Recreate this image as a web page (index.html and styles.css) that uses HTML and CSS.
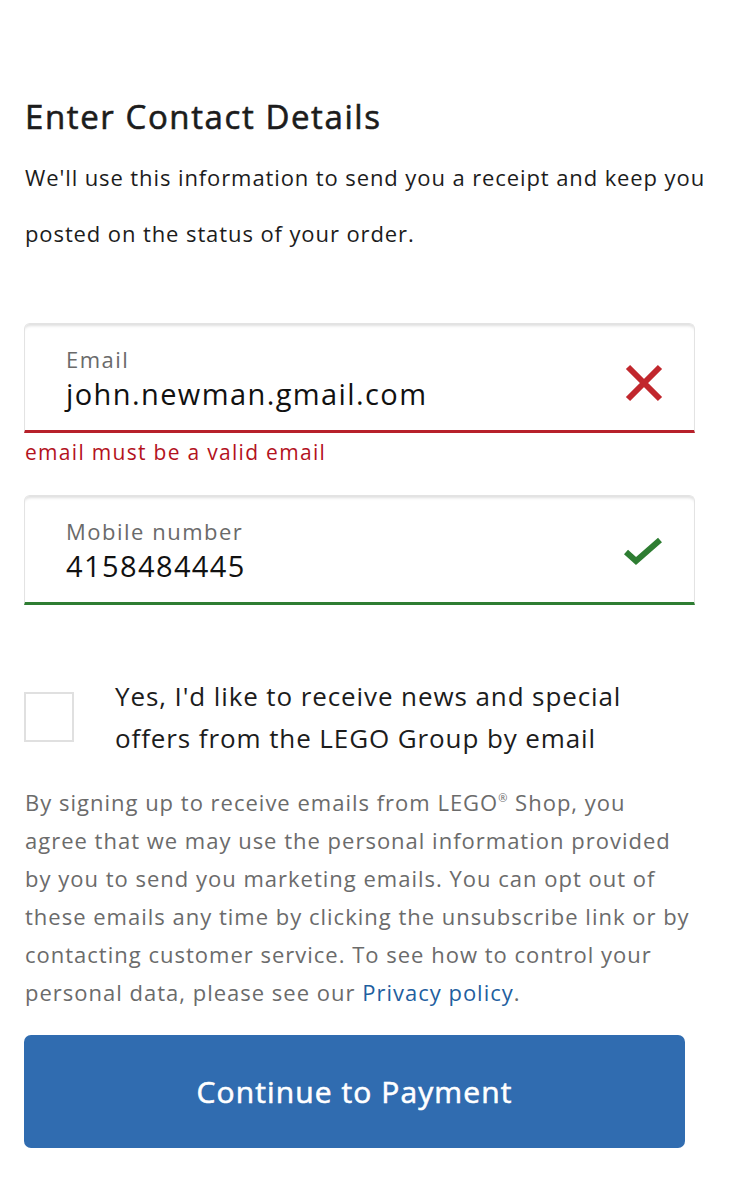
FILE: index.html
```html
<!DOCTYPE html>
<html lang="en">
<head>
<meta charset="utf-8">
<title>Enter Contact Details</title>
<link rel="stylesheet" href="styles.css">
</head>
<body>
<main class="page">
  <h1 class="title">Enter Contact Details</h1>
  <p class="intro">We'll use this information to send you a receipt and keep you posted on the status of your order.</p>

  <div class="field field--error">
    <div class="field__text">
      <span class="field__label">Email</span>
      <span class="field__value">john.newman.gmail.com</span>
    </div>
    <svg class="field__icon field__icon--x" width="40" height="38" viewBox="0 0 40 38" aria-hidden="true">
      <path d="M4 3 L36 35 M36 3 L4 35" stroke="#c1272d" stroke-width="6" fill="none"/>
    </svg>
  </div>
  <p class="field-error">email must be a valid email</p>

  <div class="field field--valid">
    <div class="field__text">
      <span class="field__label">Mobile number</span>
      <span class="field__value">4158484445</span>
    </div>
    <svg class="field__icon field__icon--check" width="40" height="30" viewBox="0 0 40 30" aria-hidden="true">
      <path d="M2 15 L12 24 L36 3" stroke="#2e7d32" stroke-width="6" fill="none" stroke-linejoin="miter"/>
    </svg>
  </div>

  <label class="optin">
    <span class="optin__box"></span>
    <span class="optin__text">Yes, I'd like to receive news and special offers from the LEGO Group by email</span>
  </label>

  <p class="legal">By signing up to receive emails from LEGO<span class="legal__reg">®</span> Shop, you agree that we may use the personal information provided by you to send you marketing emails. You can opt out of these emails any time by clicking the unsubscribe link or by contacting customer service. To see how to control your personal data, please see our <a class="legal__link" href="#">Privacy policy</a>.</p>

  <button class="cta" type="button">Continue to Payment</button>
</main>
</body>
</html>
```

FILE: styles.css
```css
* { box-sizing: border-box; }

html, body {
  margin: 0;
  padding: 0;
  background: #ffffff;
}

body {
  font-family: "Open Sans", "Noto Sans", Arial, sans-serif;
  color: #1a1a1a;
}

.page {
  width: 750px;
  padding: 95px 30px 40px 24px;
  display: flex;
  flex-direction: column;
}

.title {
  margin: 0 0 0 1px;
  font-size: 33px;
  font-weight: 400;
  -webkit-text-stroke: 0.6px currentColor;
  line-height: 44px;
  letter-spacing: 1.6px;
  color: #1c1c1c;
}

.intro {
  margin: 10px 0 0 1px;
  font-size: 22px;
  line-height: 56px;
  letter-spacing: 0.9px;
  color: #1c1c1c;
  width: 695px;
}

.field {
  margin-top: 62px;
  width: 671px;
  height: 110px;
  border: 1px solid #e3e3e3;
  border-bottom: 3px solid;
  border-radius: 6px 6px 0 0;
  box-shadow: inset 0 4px 3px -2px rgba(0, 0, 0, 0.13);
  display: flex;
  align-items: center;
  padding: 13px 30px 12px 41px;
}

.field--error { border-bottom-color: #b7202a; }
.field--valid { border-bottom-color: #2e7d32; margin-top: 28px; }

.field__text {
  flex: 1;
  display: flex;
  flex-direction: column;
}

.field__label {
  font-size: 22px;
  line-height: 32px;
  letter-spacing: 1.5px;
  color: #6a6a6a;
}

.field__value {
  font-size: 29px;
  line-height: 38px;
  letter-spacing: 1.4px;
  color: #111;
}

.field__icon { flex: none; }
.field__icon--x { margin-top: 10px; }
.field__icon--check { margin-top: 4px; }

.field-error {
  margin: 4px 0 0 1px;
  font-size: 21px;
  line-height: 30px;
  letter-spacing: 1.3px;
  color: #b3121d;
}

.optin {
  margin-top: 70px;
  display: flex;
  align-items: center;
  gap: 41px;
}

.optin__box {
  flex: none;
  width: 50px;
  height: 50px;
  border: 2px solid #e0e0e0;
}

.optin__text {
  font-size: 26px;
  line-height: 42px;
  letter-spacing: 0.9px;
  color: #1c1c1c;
  width: 540px;
}

.legal {
  margin: 24px 0 0 1px;
  font-size: 22px;
  line-height: 38px;
  letter-spacing: 1px;
  color: #6b6b6b;
  width: 666px;
}

.legal__reg {
  font-size: 11px;
  vertical-align: top;
  line-height: 30px;
}

.legal__link {
  color: #1f5f9f;
  text-decoration: none;
}

.cta {
  margin-top: 24px;
  width: 661px;
  height: 113px;
  border: none;
  border-radius: 7px;
  background: #306cb0;
  color: #ffffff;
  font-family: inherit;
  font-size: 30px;
  font-weight: 400;
  -webkit-text-stroke: 0.6px currentColor;
  letter-spacing: 1.1px;
  cursor: pointer;
}
```
